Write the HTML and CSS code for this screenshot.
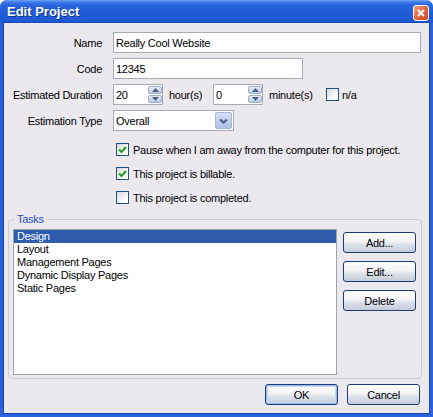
FILE: index.html
```html
<!DOCTYPE html>
<html lang="en">
<head>
    <meta charset="UTF-8">
    <meta name="viewport" content="width=device-width, initial-scale=1.0">
    <title>Edit Project</title>
    <link rel="stylesheet" href="styles.css">
</head>
<body>
    <div class="window">
        <div class="titlebar">
            <span class="title">Edit Project</span>
            <span class="close">
                <svg width="8" height="8" viewBox="0 0 8 8"><path d="M1 1L7 7M7 1L1 7" stroke="#fff" stroke-width="2"/></svg>
            </span>
        </div>

        <div class="client">
            <div class="fields">
                <label class="field-label" for="name">Name</label>
                <input class="textbox name-box" id="name" type="text" value="Really Cool Website">

                <label class="field-label" for="code">Code</label>
                <input class="textbox code-box" id="code" type="text" value="12345">

                <label class="field-label" for="hours">Estimated Duration</label>
                <div class="duration">
                    <div class="spin">
                        <input id="hours" type="text" value="20">
                        <div class="spin-btns">
                            <span class="spin-btn"><svg width="7" height="4" viewBox="0 0 7 4"><path d="M0 4L3.5 0L7 4Z" fill="#4d6185"/></svg></span>
                            <span class="spin-btn"><svg width="7" height="4" viewBox="0 0 7 4"><path d="M0 0L7 0L3.5 4Z" fill="#4d6185"/></svg></span>
                        </div>
                    </div>
                    <span class="unit hour-unit">hour(s)</span>
                    <div class="spin">
                        <input id="minutes" type="text" value="0">
                        <div class="spin-btns">
                            <span class="spin-btn"><svg width="7" height="4" viewBox="0 0 7 4"><path d="M0 4L3.5 0L7 4Z" fill="#4d6185"/></svg></span>
                            <span class="spin-btn"><svg width="7" height="4" viewBox="0 0 7 4"><path d="M0 0L7 0L3.5 4Z" fill="#4d6185"/></svg></span>
                        </div>
                    </div>
                    <span class="unit minute-unit">minute(s)</span>
                    <span class="check na-check"><span class="box"></span>n/a</span>
                </div>

                <label class="field-label">Estimation Type</label>
                <div class="combo">
                    <span class="combo-text">Overall</span>
                    <span class="combo-btn">
                        <svg width="9" height="6" viewBox="0 0 9 6"><path d="M1 1.5L4.5 4.5L8 1.5" stroke="#4d6185" stroke-width="2.2" fill="none"/></svg>
                    </span>
                </div>
            </div>

            <div class="checks">
                <div class="check">
                    <span class="box"><svg width="9" height="9" viewBox="0 0 9 9"><path d="M1 4.5L3.5 7L8 2" stroke="#21a121" stroke-width="2.2" fill="none"/></svg></span>
                    Pause when I am away from the computer for this project.
                </div>
                <div class="check">
                    <span class="box"><svg width="9" height="9" viewBox="0 0 9 9"><path d="M1 4.5L3.5 7L8 2" stroke="#21a121" stroke-width="2.2" fill="none"/></svg></span>
                    This project is billable.
                </div>
                <div class="check">
                    <span class="box"></span>
                    This project is completed.
                </div>
            </div>

            <fieldset class="tasks">
                <legend>Tasks</legend>
                <div class="tasks-body">
                    <div class="task-list">
                        <div class="task selected">Design</div>
                        <div class="task">Layout</div>
                        <div class="task">Management Pages</div>
                        <div class="task">Dynamic Display Pages</div>
                        <div class="task">Static Pages</div>
                    </div>
                    <div class="task-buttons">
                        <button class="xp-btn">Add...</button>
                        <button class="xp-btn">Edit...</button>
                        <button class="xp-btn">Delete</button>
                    </div>
                </div>
            </fieldset>

            <div class="footer">
                <button class="xp-btn default">OK</button>
                <button class="xp-btn">Cancel</button>
            </div>
        </div>
    </div>
</body>
</html>
```

FILE: styles.css
```css
body {
    margin: 0;
    font-family: "Liberation Sans", Arial, sans-serif;
    font-size: 11px;
    letter-spacing: -0.25px;
    color: #000;
}
.window {
    width: 433px;
    height: 417px;
    display: flex;
    flex-direction: column;
    background: #2a62dc;
    border-radius: 7px 7px 0 0;
    overflow: hidden;
}
.titlebar {
    height: 23px;
    flex-shrink: 0;
    display: flex;
    align-items: flex-start;
    justify-content: space-between;
    padding: 0 4px 0 7px;
    background: linear-gradient(#6fa3f3 0, #3f7ce9 2px, #2a66e0 5px, #225cd8 50%, #1f57d2 100%);
}
.title {
    margin-top: 4px;
    color: #fff;
    font-weight: bold;
    font-size: 13px;
    letter-spacing: 0;
    text-shadow: 1px 1px 0 #0c3590;
}
.close {
    margin-top: 5px;
    width: 14px;
    height: 14px;
    border: 1px solid #fff;
    border-radius: 3px;
    display: flex;
    align-items: center;
    justify-content: center;
    background: linear-gradient(135deg, #f0a080, #e0603a 55%, #c84a28);
}
.client {
    flex: 1;
    margin: 0 4px 4px;
    background: #ebe9ed;
    box-shadow: 0 0 0 1px #1848b8;
    display: flex;
    flex-direction: column;
}
.fields {
    display: grid;
    grid-template-columns: 98px auto;
    column-gap: 11px;
    row-gap: 5px;
    align-items: center;
    justify-items: start;
    padding-top: 9px;
}
.field-label {
    justify-self: end;
}
.textbox {
    box-sizing: border-box;
    height: 21px;
    border: 1px solid #a5acb5;
    padding: 0 2px;
    font: inherit;
    letter-spacing: inherit;
    background: #fff;
}
.name-box {
    width: 308px;
}
.code-box {
    width: 190px;
}
.duration {
    display: flex;
    align-items: center;
    height: 21px;
}
.spin {
    box-sizing: border-box;
    width: 50px;
    height: 21px;
    border: 1px solid #a5acb5;
    background: #fff;
    display: flex;
}
.spin input {
    width: 30px;
    border: none;
    padding: 0 2px;
    font: inherit;
    letter-spacing: inherit;
    outline: none;
}
.spin-btns {
    width: 15px;
    margin: 0 0 0 auto;
    padding: 1px 0;
    display: flex;
    flex-direction: column;
    gap: 1px;
}
.spin-btn {
    flex: 1;
    display: flex;
    align-items: center;
    justify-content: center;
    border: 1px solid #9fb0cc;
    border-radius: 2px;
    background: linear-gradient(#e6ecf7, #bccbe3);
}
.unit {
    margin-left: 6px;
}
.hour-unit {
    width: 44px;
}
.minute-unit {
    width: 57px;
}
.combo {
    box-sizing: border-box;
    width: 121px;
    height: 21px;
    border: 1px solid #a5acb5;
    background: #fff;
    display: flex;
    align-items: center;
}
.combo-text {
    flex: 1;
    padding-left: 2px;
}
.combo-btn {
    align-self: stretch;
    width: 15px;
    margin: 1px;
    display: flex;
    align-items: center;
    justify-content: center;
    border: 1px solid #a4b6dc;
    border-radius: 2px;
    background: linear-gradient(#d3def4, #aec1e8);
}
.checks {
    display: flex;
    flex-direction: column;
    gap: 11px;
    padding-left: 112px;
    margin-top: 12px;
}
.check {
    display: flex;
    align-items: center;
    gap: 4px;
    height: 13px;
}
.na-check {
    gap: 3px;
}
.box {
    box-sizing: border-box;
    width: 13px;
    height: 13px;
    border: 1px solid #1c5180;
    background: linear-gradient(135deg, #d9d9dc, #fff 80%);
    display: flex;
    align-items: center;
    justify-content: center;
    flex-shrink: 0;
}
.tasks {
    margin: 9px 7px 0 4px;
    padding: 0 4px 3px;
    border: 1px solid #cfcdd3;
    border-radius: 4px;
}
.tasks legend {
    margin-left: 2px;
    padding: 0 2px;
    color: #2650b8;
    line-height: 13px;
}
.tasks-body {
    display: flex;
    padding-top: 3px;
}
.task-list {
    box-sizing: border-box;
    width: 324px;
    height: 146px;
    border: 1px solid #a0a4ab;
    background: #fff;
}
.task {
    height: 13px;
    line-height: 13px;
    padding-left: 3px;
}
.task.selected {
    background: #2e5dad;
    color: #fff;
}
.task-buttons {
    display: flex;
    flex-direction: column;
    gap: 8px;
    margin-left: 6px;
    padding-top: 3px;
}
.xp-btn {
    box-sizing: border-box;
    width: 73px;
    height: 21px;
    padding: 0;
    font: inherit;
    letter-spacing: inherit;
    color: #000;
    border: 1px solid #1f3b73;
    border-radius: 3px;
    background: linear-gradient(#ffffff 0, #f3f3f5 45%, #dde2ea 60%, #c3ccd9 100%);
}
.xp-btn.default {
    box-shadow: inset 0 0 0 1px #9bbcef, inset 0 0 0 2px #c6d9f7;
}
.footer {
    display: flex;
    justify-content: flex-end;
    gap: 9px;
    padding: 5px 9px 0;
}
```
